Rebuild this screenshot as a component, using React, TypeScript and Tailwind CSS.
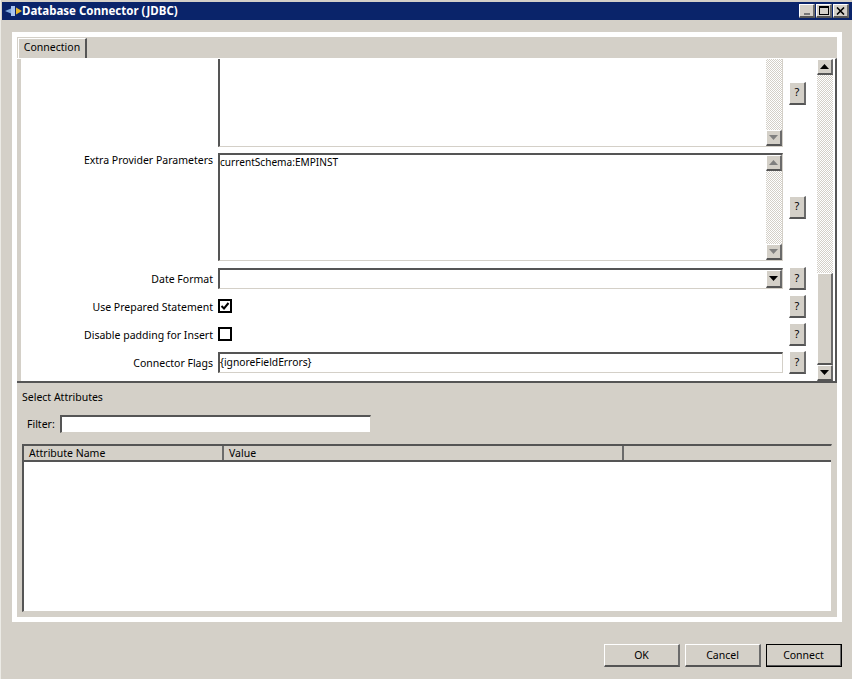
import React from 'react';

const raised = 'bg-[#d4d0c8] border-t border-l border-r-2 border-b-2 border-t-white border-l-white border-r-[#6b6b6b] border-b-[#555]';
const sunken = 'bg-white border-t-2 border-l-2 border-r border-b border-t-[#555] border-l-[#555] border-r-[#d4d0c8] border-b-[#d4d0c8]';
const hatch = 'bg-[repeating-conic-gradient(#d4d0c8_0_25%,#ffffff_0_50%)] bg-[length:2px_2px]';

const Arrow = ({ dir, color = '#000' }: { dir: 'up' | 'down'; color?: string }) => (
  <svg width="9" height="5" viewBox="0 0 9 5">
    <polygon points={dir === 'up' ? '4.5,0 9,5 0,5' : '0,0 9,0 4.5,5'} fill={color} />
  </svg>
);

const ScrollBtn = ({ dir, color }: { dir: 'up' | 'down'; color?: string }) => (
  <div className={`${raised} w-[16px] h-[16px] shrink-0 flex items-center justify-center`}>
    <Arrow dir={dir} color={color} />
  </div>
);

const Help = () => (
  <button className={`${raised} w-[17px] h-[23px] shrink-0 flex items-center justify-center text-[11px]`}>?</button>
);

const Label = ({ children, top }: { children?: React.ReactNode; top?: boolean }) => (
  <div className={`w-[192px] shrink-0 text-right ${top ? 'self-start' : 'pt-[2px]'}`}>{children}</div>
);

const TextBox = ({ text }: { text?: string }) => (
  <div className={`${sunken} w-[565px] -ml-[1px] h-[108px] shrink-0 flex`}>
    <div className="flex-1 pt-[1px] leading-[13px] text-[10.1px]">{text}</div>
    <div className={`${hatch} w-[16px] flex flex-col justify-between`}>
      <ScrollBtn dir="up" color="#808080" />
      <ScrollBtn dir="down" color="#808080" />
    </div>
  </div>
);

const Check = ({ checked }: { checked?: boolean }) => (
  <div className="w-[14px] h-[14px] -ml-[1px] -mt-[1px] border-2 border-black bg-white flex items-center justify-center">
    {checked && (
      <svg width="10" height="10" viewBox="0 0 10 10">
        <path d="M1.5 5 L4 7.5 L8.5 2" fill="none" stroke="#000" strokeWidth="2" />
      </svg>
    )}
  </div>
);

const Row = ({ className = '', children }: { className?: string; children: React.ReactNode }) => (
  <div className={`flex items-center gap-[6px] ${className}`}>{children}</div>
);

const WinBtn = ({ children }: { children: React.ReactNode }) => (
  <div className={`${raised} w-[16px] h-[14px] flex items-center justify-center`}>{children}</div>
);

const DialogBtn = ({ label, active }: { label: string; active?: boolean }) => (
  <button
    className={`${raised} w-[76px] h-[23px] pt-[2px] flex items-center justify-center text-[10.5px] ${active ? 'outline outline-1 -outline-offset-1 outline-black' : ''}`}
  >
    {label}
  </button>
);

export default function App() {
  return (
    <div className="w-[852px] h-[679px] bg-[#d4d0c8] border-l border-l-[#ecebe6] overflow-hidden text-[10.5px] text-black font-['Noto_Sans',sans-serif]">
      {/* title bar */}
      <div className="ml-[1px] mt-[2px] h-[18px] bg-[#0a246a] flex items-center text-white">
        <svg width="17" height="12" viewBox="0 0 17 12" className="ml-[3px] shrink-0">
          <path d="M0 6 L6 3.5 L6 8.5 Z" fill="#7fa8e0" />
          <rect x="6" y="1" width="4" height="10" fill="#a8c4f0" />
          <path d="M11 2.5 L17 6 L11 9.5 Z" fill="#e8b830" />
        </svg>
        <span className="font-bold text-[11.5px]">Database Connector (JDBC)</span>
        <div className="ml-auto mr-[3px] flex gap-[1px]">
          <WinBtn>
            <div className="w-[6px] h-[2px] bg-[#777] mt-[7px]" />
          </WinBtn>
          <WinBtn>
            <div className="w-[10px] h-[9px] border border-t-2 border-black" />
          </WinBtn>
          <WinBtn>
            <svg width="9" height="8" viewBox="0 0 9 8">
              <path d="M1 0.5 L8 7.5 M8 0.5 L1 7.5" stroke="#000" strokeWidth="1.6" />
            </svg>
          </WinBtn>
        </div>
      </div>

      {/* main panel */}
      <div className="ml-[11px] mt-[12px] w-[830px] h-[590px] border-[5px] border-white flex flex-col">
        <div className="h-[21px] shrink-0 pl-[1px] pt-[1px]">
          <div className="w-[69px] h-[20px] pb-[2px] border-t border-l border-r-2 border-t-white border-l-white border-r-[#555] flex items-center justify-center">
            Connection
          </div>
        </div>

        <div className="h-[325px] shrink-0 pl-[4px] border-t border-t-white border-r-2 border-b-2 border-r-[#555] border-b-[#555]">
          <div className="h-full bg-white flex">
            <div className="flex-1 overflow-hidden">
              <div className="-mt-[20px] flex flex-col">
                <Row>
                  <Label />
                  <TextBox />
                  <Help />
                </Row>
                <Row className="mt-[6px]">
                  <Label top>Extra Provider Parameters</Label>
                  <TextBox text="currentSchema:EMPINST" />
                  <Help />
                </Row>
                <Row className="mt-[6px]">
                  <Label>Date Format</Label>
                  <div className={`${sunken} w-[565px] -ml-[1px] h-[21px] flex justify-end`}>
                    <div className={`${raised} w-[16px] h-[18px] flex items-center justify-center`}>
                      <Arrow dir="down" />
                    </div>
                  </div>
                  <Help />
                </Row>
                <Row className="mt-[5px]">
                  <Label>Use Prepared Statement</Label>
                  <Check checked />
                  <div className="ml-auto mr-[11px]">
                    <Help />
                  </div>
                </Row>
                <Row className="mt-[5px]">
                  <Label>Disable padding for Insert</Label>
                  <Check />
                  <div className="ml-auto mr-[11px]">
                    <Help />
                  </div>
                </Row>
                <Row className="mt-[5px]">
                  <Label>Connector Flags</Label>
                  <div className={`${sunken} w-[565px] -ml-[1px] h-[21px] flex items-center text-[10.3px]`}>{'{ignoreFieldErrors}'}</div>
                  <Help />
                </Row>
              </div>
            </div>
            <div className={`${hatch} w-[16px] mr-[2px] flex flex-col shrink-0 justify-between`}>
              <ScrollBtn dir="up" />
              <div className="flex-1" />
              <div className={`${raised} h-[92px] shrink-0`} />
              <ScrollBtn dir="down" />
            </div>
          </div>
        </div>

        {/* attributes */}
        <div className="flex-1 flex flex-col min-h-0">
          <div className="pl-[5px] pt-[7px] leading-[15px]">Select Attributes</div>
          <div className="pl-[10px] mt-[10px] flex items-center h-[18px]">
            <span className="w-[33px] shrink-0 pt-[2px]">Filter:</span>
            <div className={`${sunken} w-[311px] h-[18px]`} />
          </div>
          <div className={`${sunken} mx-[5px] mt-[11px] w-[810px] h-[168px] flex flex-col`}>
            <div className="flex h-[16px] shrink-0 bg-[#d4d0c8] border-b-2 border-b-[#555]">
              <div className="w-[200px] pl-[5px] pt-[2px] border-r-2 border-r-[#6b6b6b] flex items-center">Attribute Name</div>
              <div className="w-[400px] pl-[5px] pt-[2px] border-r-2 border-r-[#6b6b6b] flex items-center">Value</div>
              <div className="flex-1" />
            </div>
          </div>
        </div>
      </div>

      {/* buttons */}
      <div className="mt-[22px] mr-[10px] flex justify-end gap-[5px]">
        <DialogBtn label="OK" />
        <DialogBtn label="Cancel" />
        <DialogBtn label="Connect" active />
      </div>
    </div>
  );
}
